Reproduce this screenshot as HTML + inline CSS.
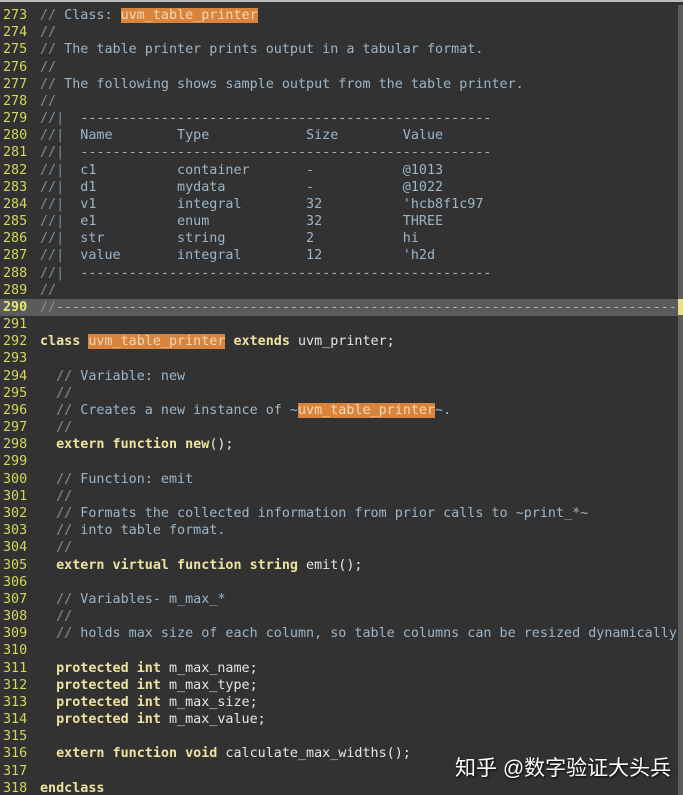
<!DOCTYPE html>
<html><head><meta charset="utf-8"><style>
html,body{margin:0;padding:0;background:#323232;width:683px;height:795px;overflow:hidden;position:relative}
.top{position:absolute;left:0;top:0;width:683px;height:2px;background:#bdbdbd}
.sb{position:absolute;right:0;top:5px;width:5px;height:790px;background:#5c5c5c}
.code{position:absolute;left:0;top:7px;font-family:"DejaVu Sans Mono","Liberation Mono",monospace;font-size:13.4px;line-height:17.18px;color:#e6e6e6}
.l{height:17.18px;position:relative;white-space:nowrap}
.n{display:inline-block;width:32px;padding-left:3px;color:#d6d65c;box-sizing:border-box}
.t{position:absolute;left:40px;top:0;white-space:pre}
.s{color:#7d8e9c}.c{color:#9cb6c8}
.k{color:#eee3a0;font-weight:bold}
.h{background:#d9843c;color:#f3d7b8}
.cur{background:#5b5b5b}
.cur .n{font-weight:bold;color:#e8e86a}
.wm{position:absolute;left:455px;top:752px;font-family:"Liberation Sans","Noto Sans CJK SC",sans-serif;font-size:21px;color:#fff;text-shadow:1px 1px 2px #000}
.mk{position:absolute;right:0;top:299px;width:5px;height:16px;background:#e8e08a}
</style></head><body>
<div class="top"></div>
<div class="code">
<div class="l"><span class="n">273</span><span class="t"><span class="s">//</span><span class="c"> Class: </span><span class="h">uvm_table_printer</span></span></div>
<div class="l"><span class="n">274</span><span class="t"><span class="s">//</span></span></div>
<div class="l"><span class="n">275</span><span class="t"><span class="s">//</span><span class="c"> The table printer prints output in a tabular format.</span></span></div>
<div class="l"><span class="n">276</span><span class="t"><span class="s">//</span></span></div>
<div class="l"><span class="n">277</span><span class="t"><span class="s">//</span><span class="c"> The following shows sample output from the table printer.</span></span></div>
<div class="l"><span class="n">278</span><span class="t"><span class="s">//</span></span></div>
<div class="l"><span class="n">279</span><span class="t"><span class="s">//|</span><span class="c">  ---------------------------------------------------</span></span></div>
<div class="l"><span class="n">280</span><span class="t"><span class="s">//|</span><span class="c">  Name        Type            Size        Value</span></span></div>
<div class="l"><span class="n">281</span><span class="t"><span class="s">//|</span><span class="c">  ---------------------------------------------------</span></span></div>
<div class="l"><span class="n">282</span><span class="t"><span class="s">//|</span><span class="c">  c1          container       -           @1013</span></span></div>
<div class="l"><span class="n">283</span><span class="t"><span class="s">//|</span><span class="c">  d1          mydata          -           @1022</span></span></div>
<div class="l"><span class="n">284</span><span class="t"><span class="s">//|</span><span class="c">  v1          integral        32          'hcb8f1c97</span></span></div>
<div class="l"><span class="n">285</span><span class="t"><span class="s">//|</span><span class="c">  e1          enum            32          THREE</span></span></div>
<div class="l"><span class="n">286</span><span class="t"><span class="s">//|</span><span class="c">  str         string          2           hi</span></span></div>
<div class="l"><span class="n">287</span><span class="t"><span class="s">//|</span><span class="c">  value       integral        12          'h2d</span></span></div>
<div class="l"><span class="n">288</span><span class="t"><span class="s">//|</span><span class="c">  ---------------------------------------------------</span></span></div>
<div class="l"><span class="n">289</span><span class="t"><span class="s">//</span></span></div>
<div class="l cur" style="width:678px"><span class="n">290</span><span class="t"><span class="s">//</span><span class="c">-------------------------------------------------------------------------------</span></span></div>
<div class="l"><span class="n">291</span></div>
<div class="l"><span class="n">292</span><span class="t"><span class="k">class</span> <span class="h">uvm_table_printer</span> <span class="k">extends</span> uvm_printer;</span></div>
<div class="l"><span class="n">293</span></div>
<div class="l"><span class="n">294</span><span class="t">  <span class="s">//</span><span class="c"> Variable: new</span></span></div>
<div class="l"><span class="n">295</span><span class="t">  <span class="s">//</span></span></div>
<div class="l"><span class="n">296</span><span class="t">  <span class="s">//</span><span class="c"> Creates a new instance of ~</span><span class="h">uvm_table_printer</span><span class="c">~.</span></span></div>
<div class="l"><span class="n">297</span><span class="t">  <span class="s">//</span></span></div>
<div class="l"><span class="n">298</span><span class="t">  <span class="k">extern function new</span>();</span></div>
<div class="l"><span class="n">299</span></div>
<div class="l"><span class="n">300</span><span class="t">  <span class="s">//</span><span class="c"> Function: emit</span></span></div>
<div class="l"><span class="n">301</span><span class="t">  <span class="s">//</span></span></div>
<div class="l"><span class="n">302</span><span class="t">  <span class="s">//</span><span class="c"> Formats the collected information from prior calls to ~print_*~</span></span></div>
<div class="l"><span class="n">303</span><span class="t">  <span class="s">//</span><span class="c"> into table format.</span></span></div>
<div class="l"><span class="n">304</span><span class="t">  <span class="s">//</span></span></div>
<div class="l"><span class="n">305</span><span class="t">  <span class="k">extern virtual function string</span> emit();</span></div>
<div class="l"><span class="n">306</span></div>
<div class="l"><span class="n">307</span><span class="t">  <span class="s">//</span><span class="c"> Variables- m_max_*</span></span></div>
<div class="l"><span class="n">308</span><span class="t">  <span class="s">//</span></span></div>
<div class="l"><span class="n">309</span><span class="t">  <span class="s">//</span><span class="c"> holds max size of each column, so table columns can be resized dynamically</span></span></div>
<div class="l"><span class="n">310</span></div>
<div class="l"><span class="n">311</span><span class="t">  <span class="k">protected int</span> m_max_name;</span></div>
<div class="l"><span class="n">312</span><span class="t">  <span class="k">protected int</span> m_max_type;</span></div>
<div class="l"><span class="n">313</span><span class="t">  <span class="k">protected int</span> m_max_size;</span></div>
<div class="l"><span class="n">314</span><span class="t">  <span class="k">protected int</span> m_max_value;</span></div>
<div class="l"><span class="n">315</span></div>
<div class="l"><span class="n">316</span><span class="t">  <span class="k">extern function void</span> calculate_max_widths();</span></div>
<div class="l"><span class="n">317</span></div>
<div class="l"><span class="n">318</span><span class="t"><span class="k">endclass</span></span></div>
</div>
<div class="sb"></div>
<div class="mk"></div>
<div class="wm">知乎 @数字验证大头兵</div>
</body></html>
